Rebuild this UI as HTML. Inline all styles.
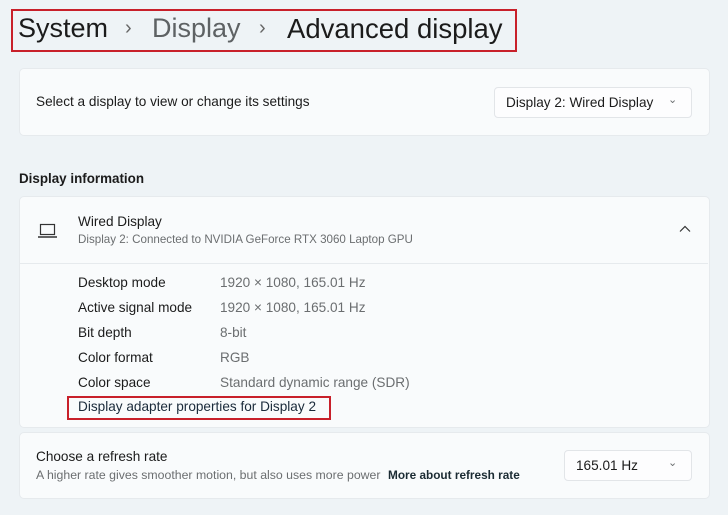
<!DOCTYPE html><html><head><style>
body{margin:0;width:728px;height:515px;background:#eef3f6;font-family:"Liberation Sans",sans-serif;position:relative;overflow:hidden;color:#1b1b1b}
.a{position:absolute;white-space:nowrap}
.card{position:absolute;background:#f9fbfc;border:1px solid #e6eaed;border-radius:5px}
.dd{position:absolute;background:#fdfdfe;border:1px solid #e2e5e8;border-radius:4px;font-size:13.6px}
.t{font-size:13.6px}
.g{color:#6b6e70}
</style></head><body>
<div class="a" style="left:11px;top:9px;width:502px;height:39px;border:2px solid #c8202a"></div>
<div class="a" style="left:18px;top:13px;font-size:27px;">System</div>
<div class="a" style="left:125px;top:17px;font-size:20px;color:#666">›</div>
<div class="a" style="left:152px;top:13px;font-size:27px;color:#5e6264">Display</div>
<div class="a" style="left:259px;top:17px;font-size:20px;color:#666">›</div>
<div class="a" style="left:287px;top:13px;font-size:27.5px;">Advanced display</div>

<div class="card" style="left:19px;top:68px;width:689px;height:66px"></div>
<div class="a t" style="left:36px;top:94px">Select a display to view or change its settings</div>
<div class="dd" style="left:494px;top:87px;width:196px;height:29px"><span class="a" style="left:11px;top:7px">Display 2: Wired Display</span><span class="a g" style="left:173px;top:5px;font-size:11px">⌄</span></div>

<div class="a" style="left:19px;top:171px;font-size:13.4px;font-weight:bold;">Display information</div>
<div class="card" style="left:19px;top:196px;width:689px;height:230px"></div>
<div class="a" style="left:20px;top:263px;width:688px;height:1px;background:#e6eaed"></div>
<svg class="a" style="left:38px;top:223px" width="20" height="16"><rect x="2.5" y="1.5" width="14" height="10" fill="none" stroke="#333" stroke-width="1.2"/><line x1="0" y1="14" x2="19" y2="14" stroke="#333" stroke-width="1.4"/></svg>
<div class="a t" style="left:78px;top:214px">Wired Display</div>
<div class="a g" style="left:78px;top:233px;font-size:11.6px">Display 2: Connected to NVIDIA GeForce RTX 3060 Laptop GPU</div>
<svg class="a" style="left:679px;top:225px" width="12" height="8"><path d="M1 6.5L6 1.5L11 6.5" fill="none" stroke="#333" stroke-width="1.2"/></svg>

<div class="a t" style="left:78px;top:275px">Desktop mode</div><div class="a t g" style="left:220px;top:275px">1920 × 1080, 165.01 Hz</div>
<div class="a t" style="left:78px;top:300px">Active signal mode</div><div class="a t g" style="left:220px;top:300px">1920 × 1080, 165.01 Hz</div>
<div class="a t" style="left:78px;top:325px">Bit depth</div><div class="a t g" style="left:220px;top:325px">8-bit</div>
<div class="a t" style="left:78px;top:350px">Color format</div><div class="a t g" style="left:220px;top:350px">RGB</div>
<div class="a t" style="left:78px;top:375px">Color space</div><div class="a t g" style="left:220px;top:375px">Standard dynamic range (SDR)</div>
<div class="a" style="left:67px;top:396px;width:260px;height:20px;border:2px solid #c8202a"></div>
<div class="a t" style="left:78px;top:399px;color:#1a2a3a">Display adapter properties for Display 2</div>

<div class="card" style="left:19px;top:432px;width:689px;height:65px"></div>
<div class="a t" style="left:36px;top:449px">Choose a refresh rate</div>
<div class="a g" style="left:36px;top:468px;font-size:12.3px">A higher rate gives smoother motion, but also uses more power</div>
<div class="a" style="left:388px;top:468px;font-size:11.8px;font-weight:bold;color:#1b2b33">More about refresh rate</div>
<div class="dd" style="left:564px;top:450px;width:126px;height:29px"><span class="a" style="left:11px;top:7px">165.01 Hz</span><span class="a g" style="left:103px;top:5px;font-size:11px">⌄</span></div>
</body></html>
